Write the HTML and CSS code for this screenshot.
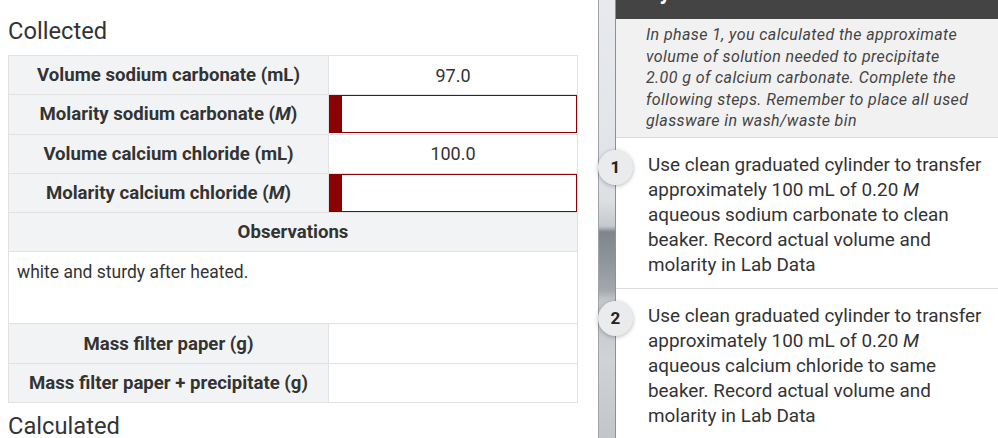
FILE: index.html
```html
<!DOCTYPE html>
<html>
<head>
<meta charset="utf-8">
<link rel="stylesheet" href="styles.css">
</head>
<body>
<div class="page">
  <main class="data">
    <h2 class="section-title">Collected</h2>
    <table class="lab-table">
      <tr><th>Volume sodium carbonate (mL)</th><td class="val">97.0</td></tr>
      <tr><th>Molarity sodium carbonate (<i>M</i>)</th><td class="input-cell"><div class="input-box"><span class="flag"></span></div></td></tr>
      <tr><th>Volume calcium chloride (mL)</th><td class="val">100.0</td></tr>
      <tr><th>Molarity calcium chloride (<i>M</i>)</th><td class="input-cell"><div class="input-box"><span class="flag"></span></div></td></tr>
      <tr><th colspan="2">Observations</th></tr>
      <tr><td colspan="2" class="obs">white and sturdy after heated.</td></tr>
      <tr><th>Mass filter paper (g)</th><td class="val"></td></tr>
      <tr><th>Mass filter paper + precipitate (g)</th><td class="val"></td></tr>
    </table>
    <h2 class="section-title calc">Calculated</h2>
  </main>
  <aside class="side">
    <div class="card">
      <div class="card-head"><span class="head-text">Synthesis</span></div>
      <p class="intro">In phase 1, you calculated the approximate volume of solution needed to precipitate 2.00 g of calcium carbonate. Complete the following steps. Remember to place all used glassware in wash/waste bin</p>
      <div class="step">
        <span class="num">1</span>
        <p class="step-text">Use clean graduated cylinder to transfer approximately 100 mL of 0.20 <i>M</i> aqueous sodium carbonate to clean beaker. Record actual volume and molarity in Lab Data</p>
      </div>
      <div class="step">
        <span class="num">2</span>
        <p class="step-text">Use clean graduated cylinder to transfer approximately 100 mL of 0.20 <i>M</i> aqueous calcium chloride to same beaker. Record actual volume and molarity in Lab Data</p>
      </div>
    </div>
  </aside>
</div>
</body>
</html>
```
FILE: styles.css
```css
* { box-sizing: border-box; }
html, body { margin: 0; padding: 0; }
body {
  font-family: Roboto, "Liberation Sans", Arial, sans-serif;
  color: #333;
  background: #fff;
  width: 998px;
  height: 438px;
  overflow: hidden;
}
.page {
  display: flex;
  height: 438px;
}
.data {
  width: 598px;
  padding-left: 8px;
  padding-top: 17px;
}
.section-title {
  margin: 0;
  font-size: 23.7px;
  font-weight: 400;
  line-height: 28px;
  color: #333;
}
.section-title.calc { margin-top: 9px; }
.lab-table {
  margin-top: 10px;
  width: 570px;
  border-collapse: collapse;
  table-layout: fixed;
}
.lab-table th, .lab-table td {
  border: 1px solid #e2e2e2;
  height: 39.3px;
  font-size: 18px;
  padding: 0;
}
.lab-table th {
  width: 320px;
  background: #f2f3f4;
  font-weight: 700;
  font-size: 18.6px;
  text-align: center;
  color: #333;
}
.lab-table th i { font-style: italic; }
.lab-table td.val {
  text-align: center;
  color: #333;
}
.lab-table td.obs {
  height: 72px;
  vertical-align: top;
  padding: 10px 8px;
  font-size: 17.5px;
  color: #333;
}
.input-cell { padding: 0; }
.input-box {
  height: 38px;
  border: 1px solid #8b0000;
  display: flex;
}
.flag {
  width: 12px;
  background: #8b0000;
}
.side {
  width: 400px;
  border-left: 1px solid #9ea2a6;
  background: linear-gradient(to bottom,
    #e7e9ed 0px, #e3e6ea 120px, #dcdfe3 200px, #c6cacf 226px,
    #7f858c 232px, #8e949b 260px, #a3a8ae 290px, #c3c7cc 300px,
    #cfd3d8 360px, #c2c6cb 438px);
  padding-left: 16px;
}
.card {
  height: 438px;
  background: #fff;
  border-left: 1px solid #8d9196;
}
.card-head {
  height: 19px;
  background: #444;
  overflow: hidden;
  padding-left: 30px;
}
.head-text {
  display: block;
  color: #fff;
  font-size: 22px;
  font-weight: 700;
  line-height: 22px;
  margin-top: -19px;
}
.intro {
  margin: 0;
  background: #f1f1f1;
  border-bottom: 1px solid #dcdcdc;
  padding: 5px 23px 5px 30px;
  font-size: 16px;
  font-style: italic;
  line-height: 21.5px;
  letter-spacing: 0.4px;
  color: #444;
}
.step {
  position: relative;
  padding: 14px 12px 11px 32px;
  border-bottom: 1px solid #dcdcdc;
}
.num {
  position: absolute;
  left: -18px;
  top: 12px;
  width: 35px;
  height: 35px;
  border-radius: 50%;
  background: #e9ebec;
  box-shadow: 0 1px 4px rgba(0,0,0,0.28);
  display: flex;
  align-items: center;
  justify-content: center;
  font-weight: 700;
  font-size: 17px;
  color: #222;
}
.step-text {
  margin: 0;
  font-size: 18.9px;
  line-height: 25px;
  color: #333;
}
```
